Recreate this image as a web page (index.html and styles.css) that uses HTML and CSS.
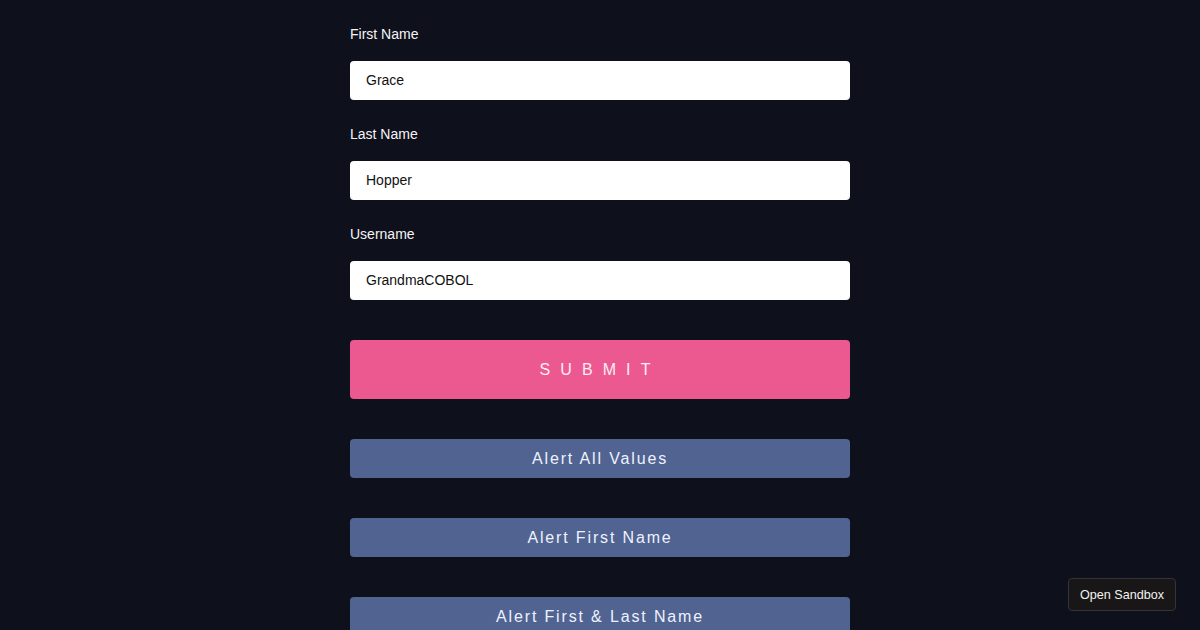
FILE: index.html
```html
<!DOCTYPE html>
<html>
<head>
<meta charset="utf-8">
<link rel="stylesheet" href="styles.css">
</head>
<body>
<main class="form">
  <div class="field">
    <label class="label">First Name</label>
    <input class="input" type="text" value="Grace">
  </div>
  <div class="field">
    <label class="label">Last Name</label>
    <input class="input" type="text" value="Hopper">
  </div>
  <div class="field">
    <label class="label">Username</label>
    <input class="input" type="text" value="GrandmaCOBOL">
  </div>
  <button class="submit">SUBMIT</button>
  <button class="alert">Alert All Values</button>
  <button class="alert">Alert First Name</button>
  <button class="alert">Alert First &amp; Last Name</button>
</main>
<button class="sandbox">Open Sandbox</button>
</body>
</html>
```
FILE: styles.css
```css
html, body {
  margin: 0;
  padding: 0;
  background: #0e101b;
  height: 100%;
  overflow: hidden;
  font-family: "Liberation Sans", Arial, sans-serif;
}
.form {
  width: 500px;
  margin: 0 auto;
  padding-top: 26px;
  display: flex;
  flex-direction: column;
}
.field {
  display: flex;
  flex-direction: column;
  margin-bottom: 26px;
}
.field:nth-child(3) {
  margin-bottom: 40px;
}
.label {
  color: #f4f4f8;
  font-size: 14px;
  line-height: 16px;
  margin-bottom: 19px;
}
.input {
  box-sizing: border-box;
  height: 39px;
  border: none;
  border-radius: 4px;
  background: #ffffff;
  padding: 0 16px 1px;
  font-family: "Liberation Sans", Arial, sans-serif;
  font-size: 14px;
  color: #111111;
  outline: none;
}
.submit {
  height: 59px;
  border: none;
  border-radius: 4px;
  background: #ec5990;
  color: #fdeef3;
  font-family: "Liberation Sans", Arial, sans-serif;
  font-size: 16px;
  letter-spacing: 10.1px;
  margin-bottom: 40px;
  padding: 0;
}
.alert {
  height: 39px;
  border: none;
  border-radius: 4px;
  background: #516391;
  color: #eef2ff;
  font-family: "Liberation Sans", Arial, sans-serif;
  font-size: 16px;
  letter-spacing: 1.85px;
  margin-bottom: 40px;
  padding: 0;
}
.sandbox {
  position: fixed;
  right: 24px;
  bottom: 19px;
  height: 33px;
  padding: 0 11px;
  background: #181616;
  border: 1px solid #35333a;
  border-radius: 4px;
  color: #f2f2f2;
  font-family: "Liberation Sans", Arial, sans-serif;
  font-size: 12.6px;
}
```
